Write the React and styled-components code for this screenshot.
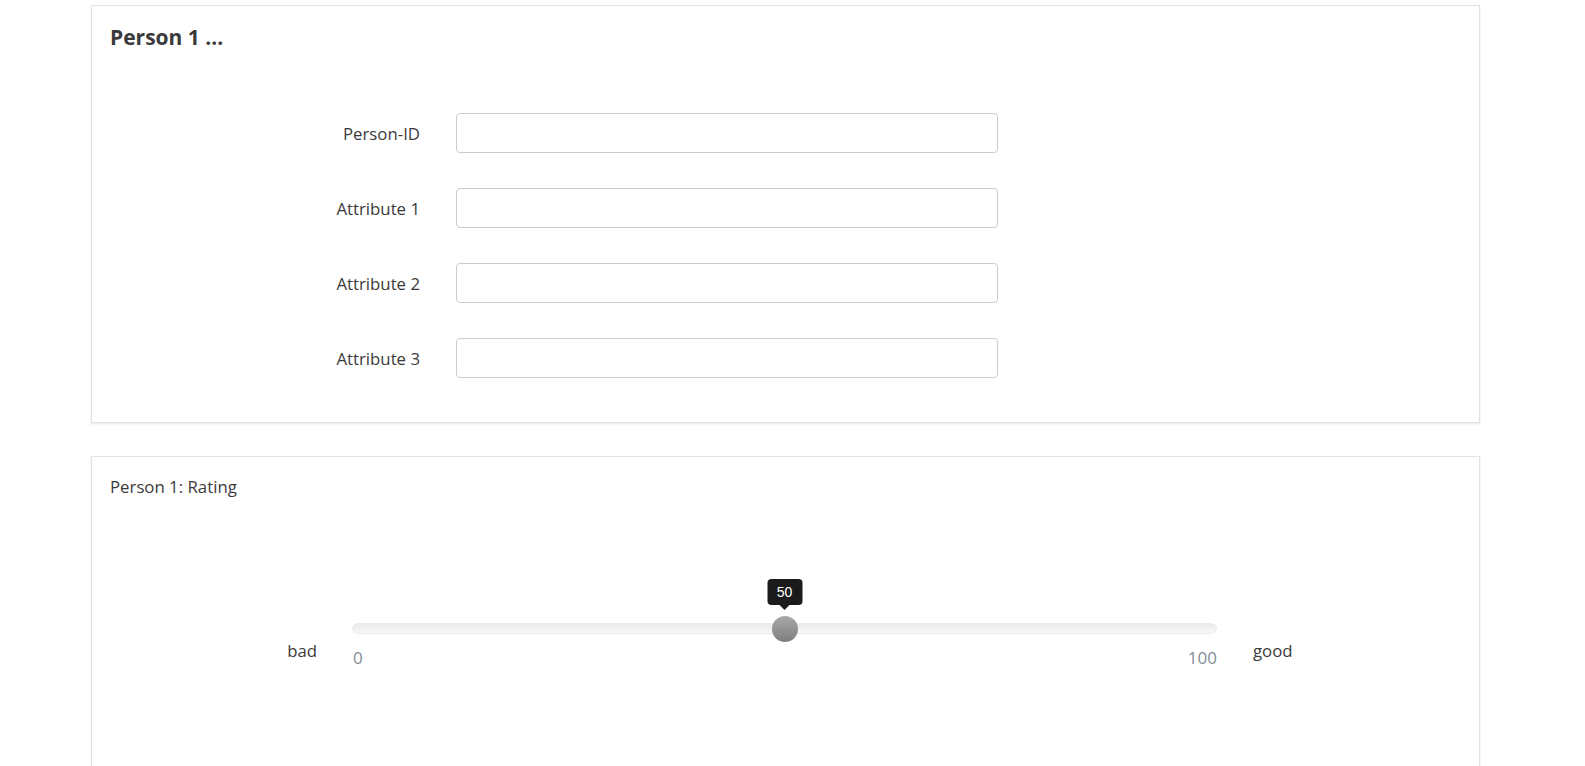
import React from "react";
import styled, { createGlobalStyle } from "styled-components";

const GlobalStyle = createGlobalStyle`
  html, body {
    margin: 0;
    padding: 0;
    background: #ffffff;
    font-family: "Open Sans", "Liberation Sans", sans-serif;
    color: #333333;
  }
`;

const Page = styled.div`
  width: 1389px;
  margin-left: 91px;
  padding-top: 5px;
  display: flex;
  flex-direction: column;
  gap: 33px;
`;

const Panel = styled.div`
  background: #ffffff;
  border: 1px solid #e3e3e3;
  box-shadow: 0 1px 2px rgba(0, 0, 0, 0.1);
  padding: ${props => props.padding || "18px"};
`;

const Title = styled.h3`
  margin: 0;
  font-size: 21px;
  line-height: 26px;
  font-weight: 700;
  color: #3a3a3a;
`;

const SubTitle = styled.div`
  font-size: 16.8px;
  line-height: 20px;
  color: #3a3a3a;
`;

const Form = styled.div`
  display: grid;
  grid-template-columns: 310px 542px;
  column-gap: 36px;
  row-gap: 35px;
  margin-top: 63px;
  align-items: center;
`;

const Label = styled.label`
  text-align: right;
  font-size: 16.8px;
  color: #3a3a3a;
`;

const Input = styled.input`
  box-sizing: border-box;
  height: 40px;
  width: 100%;
  border: 1px solid #cccccc;
  border-radius: 4px;
  padding: 6px 12px;
  font-family: inherit;
  font-size: 16px;
  outline: none;
`;

const SliderRow = styled.div`
  display: flex;
  align-items: flex-start;
  margin-top: 81px;
  padding-bottom: 100px;
`;

const SideLabel = styled.div`
  width: ${props => props.width || "auto"};
  text-align: ${props => props.align || "left"};
  margin-top: 63px;
  font-size: 16.8px;
  line-height: 20px;
  color: #3a3a3a;
`;

const Slider = styled.div`
  position: relative;
  width: 865px;
  height: 92px;
  margin: 0 36px 0 35px;
`;

const Track = styled.div`
  position: absolute;
  left: 0;
  right: 0;
  top: 45px;
  height: 11px;
  border-radius: 6px;
  background: linear-gradient(to bottom, #eaeaea, #f7f7f7);
  border: 1px solid #ececec;
  box-sizing: border-box;
`;

const Thumb = styled.div`
  position: absolute;
  top: 38px;
  width: 26px;
  height: 26px;
  margin-left: -13px;
  border-radius: 50%;
  background: linear-gradient(to bottom, #a8a8a8, #7e7e7e);
`;

const Tip = styled.div`
  position: absolute;
  top: 1px;
  transform: translateX(-50%);
  width: 35px;
  text-align: center;
  background: #1b1b1b;
  color: #fff;
  font-family: "Liberation Sans", Arial, sans-serif;
  font-size: 14px;
  line-height: 26px;
  border-radius: 4px;
  &::after {
    content: "";
    position: absolute;
    left: 50%;
    bottom: -5px;
    margin-left: -5px;
    border-left: 5px solid transparent;
    border-right: 5px solid transparent;
    border-top: 5px solid #1b1b1b;
  }
`;

const Bound = styled.span`
  position: absolute;
  top: 70px;
  font-size: 17px;
  line-height: 20px;
  color: #848f98;
  ${props => (props.right ? "right: 0;" : "left: 1px;")}
`;

const fields = ["Person-ID", "Attribute 1", "Attribute 2", "Attribute 3"];

const App = () => {
  const value = 50;
  return (
    <>
      <GlobalStyle />
      <Page>
        <Panel padding="18px 18px 44px 18px">
          <Title>Person 1 ...</Title>
          <Form>
            {fields.map(f => (
              <React.Fragment key={f}>
                <Label>{f}</Label>
                <Input type="text" />
              </React.Fragment>
            ))}
          </Form>
        </Panel>
        <Panel padding="20px 18px 0 18px">
          <SubTitle>Person 1: Rating</SubTitle>
          <SliderRow>
            <SideLabel width="207px" align="right">bad</SideLabel>
            <Slider>
              <Tip style={{ left: `${value}%` }}>{value}</Tip>
              <Track />
              <Thumb style={{ left: `${value}%` }} />
              <Bound>0</Bound>
              <Bound right>100</Bound>
            </Slider>
            <SideLabel>good</SideLabel>
          </SliderRow>
        </Panel>
      </Page>
    </>
  );
};

export default App;
